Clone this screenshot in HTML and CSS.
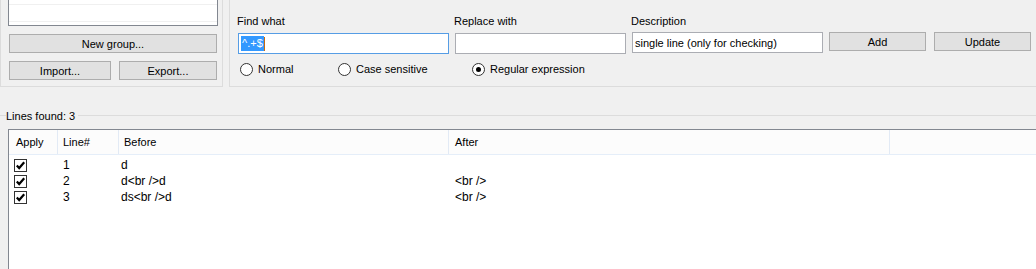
FILE: index.html
```html
<!DOCTYPE html>
<html>
<head>
<meta charset="utf-8">
<link rel="stylesheet" href="styles.css">
</head>
<body>
<div class="top">
  <div class="left-panel">
    <div class="listbox">
      <div class="list-row list-row--a"></div>
      <div class="list-row list-row--b"></div>
    </div>
    <div class="btn btn--wide">New group...</div>
    <div class="btn-row">
      <div class="btn btn--import">Import...</div>
      <div class="btn btn--export">Export...</div>
    </div>
  </div>
  <div class="right-panel">
    <div class="fields">
      <div class="field field--find">
        <div class="label">Find what</div>
        <div class="input input--focus"><span class="sel">^.+$</span><span class="caret"></span></div>
      </div>
      <div class="field field--replace">
        <div class="label">Replace with</div>
        <div class="input"></div>
      </div>
      <div class="field field--desc">
        <div class="label">Description</div>
        <div class="input input--up">single line (only for checking)</div>
      </div>
      <div class="field field--btn">
        <div class="label">&nbsp;</div>
        <div class="btn btn--up">Add</div>
      </div>
      <div class="field field--btn field--last">
        <div class="label">&nbsp;</div>
        <div class="btn btn--up">Update</div>
      </div>
    </div>
    <div class="radios">
      <div class="radio"><span class="circle"></span>Normal</div>
      <div class="radio"><span class="circle"></span>Case sensitive</div>
      <div class="radio"><span class="circle circle--on"></span>Regular expression</div>
    </div>
  </div>
</div>

<div class="group-title">
  <span class="gline gline--start"></span>
  <span class="gtext">Lines found: 3</span>
  <span class="gline gline--rest"></span>
</div>

<div class="table">
  <div class="thead">
    <div class="c c1">Apply</div>
    <div class="c c2">Line#</div>
    <div class="c c3">Before</div>
    <div class="c c4">After</div>
    <div class="c c5"></div>
  </div>
  <div class="tbody">
    <div class="tr">
      <div class="c c1"><span class="check"><svg width="11" height="11" viewBox="0 0 11 11"><path d="M1.8 5.4 L4.2 8 L9.2 2.2" fill="none" stroke="#000" stroke-width="2.2"/></svg></span></div>
      <div class="c c2">1</div>
      <div class="c c3">d</div>
      <div class="c c4"></div>
    </div>
    <div class="tr">
      <div class="c c1"><span class="check"><svg width="11" height="11" viewBox="0 0 11 11"><path d="M1.8 5.4 L4.2 8 L9.2 2.2" fill="none" stroke="#000" stroke-width="2.2"/></svg></span></div>
      <div class="c c2">2</div>
      <div class="c c3">d&lt;br /&gt;d</div>
      <div class="c c4">&lt;br /&gt;</div>
    </div>
    <div class="tr">
      <div class="c c1"><span class="check"><svg width="11" height="11" viewBox="0 0 11 11"><path d="M1.8 5.4 L4.2 8 L9.2 2.2" fill="none" stroke="#000" stroke-width="2.2"/></svg></span></div>
      <div class="c c2">3</div>
      <div class="c c3">ds&lt;br /&gt;d</div>
      <div class="c c4">&lt;br /&gt;</div>
    </div>
  </div>
</div>
</body>
</html>
```
FILE: styles.css
```css
* { box-sizing: border-box; }
html, body {
  margin: 0;
  padding: 0;
  width: 1036px;
  height: 269px;
  overflow: hidden;
  background: #f0f0f0;
  font-family: "Liberation Sans", Arial, sans-serif;
  font-size: 11px;
  color: #000;
}

.top {
  display: flex;
  height: 87px;
}

.left-panel {
  width: 223px;
  height: 87px;
  border-left: 1px solid #dcdcdc;
  border-right: 1px solid #dcdcdc;
  border-bottom: 1px solid #dcdcdc;
  padding-left: 7px;
}

.listbox {
  width: 210px;
  height: 26px;
  background: #fff;
  border: 1px solid #828790;
  border-top: none;
}
.list-row { border-bottom: 1px solid #f0f0f0; }
.list-row--a { height: 5px; }
.list-row--b { height: 17px; }

.btn {
  height: 19px;
  background: #e1e1e1;
  border: 1px solid #adadad;
  display: flex;
  align-items: center;
  justify-content: center;
  line-height: 13px;
  padding-top: 1px;
}
.btn--wide {
  width: 208px;
  margin: 8px 0 0 1px;
}
.btn-row {
  display: flex;
  gap: 8px;
  margin: 8px 0 0 1px;
}
.btn--import { width: 102px; }
.btn--export { width: 98px; }

.right-panel {
  flex: 1;
  margin-left: 6px;
  margin-right: -10px;
  height: 87px;
  border-left: 1px solid #dcdcdc;
  border-bottom: 1px solid #dcdcdc;
  padding: 15px 0 0 8px;
}

.fields {
  display: flex;
  gap: 6px;
  align-items: flex-start;
}
.field { display: flex; flex-direction: column; }
.field--find { width: 211px; }
.field--replace { width: 171px; }
.field--desc { width: 191px; }
.field--btn { width: 97px; }
.field--last { margin-left: 2px; }

.label {
  line-height: 13px;
  height: 13px;
  margin-left: -1px;
  margin-bottom: 5px;
  white-space: nowrap;
}

.input {
  height: 21px;
  background: #fff;
  border: 1px solid #abadb3;
  display: flex;
  align-items: center;
  padding-left: 2px;
  white-space: nowrap;
  overflow: hidden;
}
.input--up { margin-top: -1px; }
.input--focus { border-color: #569de5; }
.sel {
  background: #3399ff;
  color: #fff;
  padding: 1px 1px 1px 1px;
  line-height: 13px;
}
.caret {
  width: 1px;
  height: 14px;
  background: #c66a10;
}
.btn--up { margin-top: -1px; }

.radios {
  display: grid;
  grid-template-columns: 98px 134px auto;
  margin: 9px 0 0 2px;
  height: 13px;
}
.radio {
  display: flex;
  align-items: center;
  height: 13px;
  line-height: 13px;
  white-space: nowrap;
}
.circle {
  width: 13px;
  height: 13px;
  border: 1px solid #333;
  border-radius: 50%;
  background: #fff;
  margin-right: 5px;
  display: flex;
  align-items: center;
  justify-content: center;
  flex: none;
}
.circle--on::after {
  content: "";
  width: 5px;
  height: 5px;
  border-radius: 50%;
  background: #000;
}

.group-title {
  display: flex;
  align-items: center;
  height: 13px;
  margin-top: 22px;
}
.gline {
  height: 1px;
  background: #dcdcdc;
}
.gline--start { width: 6px; }
.gline--rest { flex: 1; margin-left: 3px; }
.gtext {
  line-height: 12px;
  margin-top: 1px;
  white-space: nowrap;
}

.table {
  margin: 7px -20px 0 8px;
  height: 140px;
  border: 1px solid #828790;
  border-bottom: none;
  background: #fff;
}
.thead {
  display: flex;
  height: 25px;
  background: #fcfcfc;
  border-bottom: 1px solid #e5eef9;
}
.thead .c {
  border-right: 1px solid #e2eaf5;
  line-height: 25px;
  padding-left: 6px;
  white-space: nowrap;
}
.c1 { width: 49px; }
.c2 { width: 61px; }
.c3 { width: 330px; }
.c4 { width: 441px; }
.c5 { flex: 1; }
.thead .c1 { padding-left: 7px; }
.thead .c2, .thead .c3 { padding-left: 5px; }

.tbody { padding-top: 2px; }
.tr {
  display: flex;
  height: 16px;
  align-items: center;
  font-size: 12px;
}
.tr .c { white-space: nowrap; line-height: 16px; }
.tr .c1 { padding-left: 5px; display: flex; align-items: center; }
.tr .c2 { padding-left: 5px; }
.tr .c3 { padding-left: 2px; }
.tr .c4 { padding-left: 6px; }

.check {
  width: 13px;
  height: 13px;
  border: 1px solid #333;
  background: #fff;
  display: flex;
}
.check svg { display: block; }
```
